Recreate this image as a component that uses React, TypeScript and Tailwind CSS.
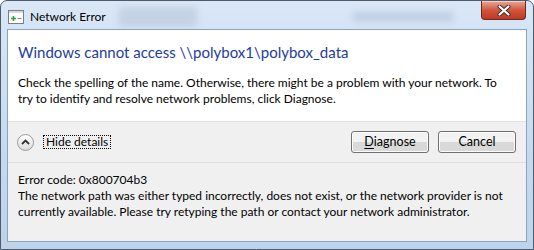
import React from 'react'

const font = { fontFamily: 'Lato, "Noto Sans", sans-serif' }

function TitleIcon() {
  return (
    <svg width="16" height="14" viewBox="0 0 16 14" className="shrink-0">
      <rect x="0.5" y="0.5" width="15" height="13" fill="#ffffff" stroke="#7d7d7d" />
      <rect x="1" y="1" width="14" height="2" fill="#d8d8d8" />
      <path d="M3 8.5h5M5.5 6v5" stroke="#2fa12f" strokeWidth="1.6" />
      <path d="M9.5 8.5h4" stroke="#8a8a8a" strokeWidth="1.2" />
    </svg>
  )
}

function CloseButton() {
  return (
    <div className="absolute right-[7px] top-0 flex h-[19px] w-[45px] items-center justify-center rounded-b-[4px] border border-t-0 border-[#6b2a1f] bg-gradient-to-b from-[#e9a795] via-[#d0563f] to-[#c1381f] shadow-[inset_0_1px_0_rgba(255,255,255,0.5)]">
      <svg width="14" height="11" viewBox="0 0 14 11">
        <path d="M2.5 1.5l9 8M11.5 1.5l-9 8" stroke="#3c2a26" strokeWidth="4" strokeLinecap="round" />
        <path d="M2.5 1.5l9 8M11.5 1.5l-9 8" stroke="#ffffff" strokeWidth="2.2" strokeLinecap="round" />
      </svg>
    </div>
  )
}

function WinButton({ children }: { children: React.ReactNode }) {
  return (
    <button className="flex h-[22px] w-[78px] items-center justify-center rounded-[3px] border border-[#707070] bg-gradient-to-b from-[#f2f2f2] from-50% to-[#d9d9d9] to-50% text-[12.5px] text-black shadow-[inset_0_0_0_1px_#fcfcfc]">
      {children}
    </button>
  )
}

function Chevron() {
  return (
    <div className="flex h-[17px] w-[17px] items-center justify-center rounded-full border border-[#9a9a9a] bg-gradient-to-b from-[#ffffff] to-[#dcdcdc]">
      <svg width="9" height="6" viewBox="0 0 9 6">
        <path d="M1 5l3.5-3.5L8 5" fill="none" stroke="#333333" strokeWidth="1.8" />
      </svg>
    </div>
  )
}

export default function App() {
  return (
    <div className="h-[250px] w-[534px] bg-white" style={font}>
      <div className="relative flex h-[250px] w-[534px] flex-col overflow-hidden rounded-t-[7px] border border-[#4e5b6b] bg-gradient-to-b from-[#d9e7f6] via-[#c9dcf0] to-[#bcd3eb] px-[6px] pb-[7px]">
        {/* blurred glass behind the title bar */}
        <div className="absolute left-[118px] top-[6px] h-[20px] w-[78px] rounded-[3px] bg-[#b7c7d8] opacity-60 blur-[3px]" />
        <div className="absolute left-[352px] top-[11px] h-[10px] w-[100px] bg-[#a9bdd3] opacity-50 blur-[3px]" />

        {/* title bar */}
        <div className="relative flex h-[28px] shrink-0 items-center gap-[6px] pl-[1px] pt-[3px]">
          <TitleIcon />
          <span className="text-[12px] text-black">Network Error</span>
        </div>
        <CloseButton />

        {/* client area */}
        <div className="relative flex flex-1 flex-col border border-[#8aa3bf] bg-[#f0f0f0]">
          <div className="h-[91px] bg-white pl-[10px] pr-[22px] pt-[12px]">
            <div className="text-[15px] leading-[21px] text-[#1e3d9b]">
              Windows cannot access \\polybox1\polybox_data
            </div>
            <p className="mt-[12px] text-[12px] leading-[16px] text-black">
              Check the spelling of the name. Otherwise, there might be a problem with your network. To try to identify and resolve network problems, click Diagnose.
            </p>
          </div>
          <div className="flex h-[42px] items-center justify-between border-y border-[#dfdfdf] pl-[9px] pr-[10px]">
            <div className="flex items-center gap-[9px]">
              <Chevron />
              <span className="border border-dotted border-black px-[2px] text-[12px] leading-[12px] text-black">
                Hide details
              </span>
            </div>
            <div className="flex items-center gap-[9px]">
              <WinButton>
                <span className="underline underline-offset-2">D</span>iagnose
              </WinButton>
              <WinButton>Cancel</WinButton>
            </div>
          </div>
          <div className="px-[10px] pt-[9px] text-[12px] leading-[16px] text-black">
            <div>Error code: 0x800704b3</div>
            <div>
              The network path was either typed incorrectly, does not exist, or the network provider is not currently available. Please try retyping the path or contact your network administrator.
            </div>
          </div>
        </div>
      </div>
    </div>
  )
}
